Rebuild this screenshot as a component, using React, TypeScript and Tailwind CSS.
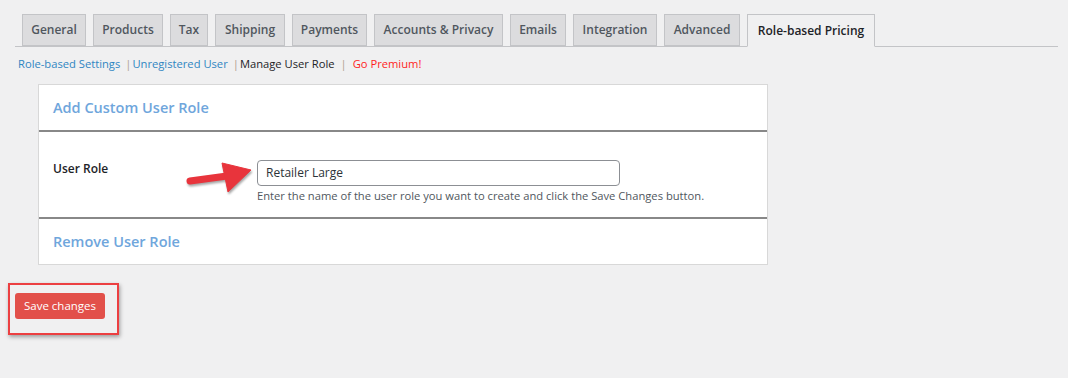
const tabs: [string, number][] = [
  ["General", 64],
  ["Products", 70],
  ["Tax", 38],
  ["Shipping", 70],
  ["Payments", 75],
  ["Accounts & Privacy", 129],
  ["Emails", 56],
  ["Integration", 84],
  ["Advanced", 76],
];

function Arrow() {
  return (
    <svg width="70" height="36" viewBox="0 0 70 36" className="drop-shadow-[1px_2px_1px_rgba(0,0,0,0.35)]">
      <path d="M5 21 L42 16" stroke="#e8343c" strokeWidth="7" strokeLinecap="round" fill="none" />
      <path d="M37 3 L66 10 L43 32 Z" fill="#e8343c" strokeLinejoin="round" stroke="#e8343c" strokeWidth="1" />
    </svg>
  );
}

export default function App() {
  return (
    <div
      className="min-h-[378px] w-[1068px] bg-[#f0f0f1] text-[#3c434a]"
      style={{ fontFamily: '"Open Sans", "Noto Sans", sans-serif' }}
    >
      <div className="pt-[14px] px-[15px]">
        <div className="flex gap-[7px] border-b border-[#c3c4c7] pl-[7px] w-[1043px]">
          {tabs.map(([t, w]) => (
            <div
              key={t}
              style={{ width: w }}
              className="h-[32px] -mb-px flex items-center justify-center border border-[#c3c4c7] bg-[#dcdcde] text-[12px] font-semibold text-[#50575e] whitespace-nowrap"
            >
              {t}
            </div>
          ))}
          <div className="w-[128px] h-[33px] -mb-px flex items-center justify-center border border-[#c3c4c7] border-b-[#f0f0f1] bg-[#f0f0f1] text-[12px] font-semibold text-[#1d2327] whitespace-nowrap">
            Role-based Pricing
          </div>
        </div>
        <div className="mt-[9px] ml-[3px] text-[11.2px] flex items-center">
          <span className="text-[#2f86c2]">Role-based Settings</span>
          <span className="text-[#b0a090] ml-[5px] mr-[1px]">|</span>
          <span className="text-[#2f86c2]">Unregistered User</span>
          <span className="text-[#b0a090] ml-[5px] mr-[1px]">|</span>
          <span className="text-[#1d2327]">Manage User Role</span>
          <span className="text-[#b0a090] ml-[6px] mr-[6px]">|</span>
          <span className="text-[#ff1e1e]">Go Premium!</span>
        </div>
      </div>

      <div className="ml-[38px] mt-[11px] w-[730px] bg-white border border-[#d8d8d8]">
        <div className="h-[47px] pt-[2px] flex items-center px-[14px] border-b-2 border-[#888] text-[14.5px] font-semibold text-[#6fa6dc]">
          Add Custom User Role
        </div>
        <div className="h-[85px] flex pl-[14px] pt-[28px]">
          <div className="w-[204px] text-[12px] font-semibold text-[#1d2327]">User Role</div>
          <div className="relative">
            <div className="absolute -left-[72px] top-0">
              <Arrow />
            </div>
            <div className="w-[363px] h-[26px] border border-[#8c8f94] rounded-[4px] flex items-center px-[8px] text-[12px] text-[#2c3338]">
              Retailer Large
            </div>
            <div className="mt-[2px] text-[11.2px] text-[#50575e] whitespace-nowrap">
              Enter the name of the user role you want to create and click the Save Changes button.
            </div>
          </div>
        </div>
        <div className="h-[47px] pt-[1px] flex items-center px-[14px] border-t-2 border-[#888] text-[14.5px] font-semibold text-[#6fa6dc]">
          Remove User Role
        </div>
      </div>

      <div className="ml-[8px] mt-[18px] w-[111px] h-[52px] border-2 border-[#ec3f41] shadow-[1px_2px_4px_rgba(0,0,0,0.35)] pl-[5px] pt-[8px]">
        <div className="w-[90px] h-[26px] rounded-[3px] bg-[#e2504a] text-white text-[11.5px] flex items-center justify-center">
          Save changes
        </div>
      </div>
    </div>
  );
}
